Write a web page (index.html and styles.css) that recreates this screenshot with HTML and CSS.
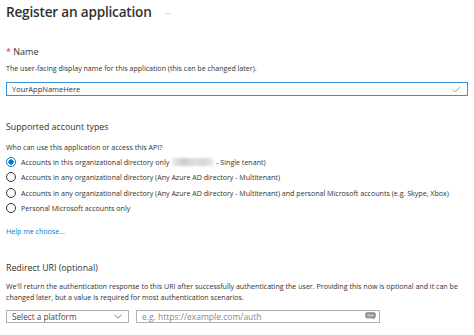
FILE: index.html
```html
<!DOCTYPE html>
<html lang="en">
<head>
    <meta charset="UTF-8">
    <title>Register an application</title>
    <link rel="stylesheet" href="styles.css">
</head>
<body>
<div class="page">
    <div class="title-row">
        <h1>Register an application</h1>
        <span class="more">&middot;&middot;&middot;</span>
    </div>

    <div class="label"><span class="req">*</span> Name</div>
    <p class="hint">The user-facing display name for this application (this can be changed later).</p>
    <div class="input valid">
        <span class="value">YourAppNameHere</span>
        <svg class="check" width="9" height="7" viewBox="0 0 9 7"><path d="M1 3.6 L3.4 6 L8 1" fill="none" stroke="#7fb24a" stroke-width="1"/></svg>
    </div>

    <h2>Supported account types</h2>
    <p class="hint">Who can use this application or access this API?</p>
    <div class="radios">
        <div class="radio checked"><span class="circle"></span>Accounts in this organizational directory only <span class="blur"></span>- Single tenant)</div>
        <div class="radio"><span class="circle"></span>Accounts in any organizational directory (Any Azure AD directory - Multitenant)</div>
        <div class="radio"><span class="circle"></span>Accounts in any organizational directory (Any Azure AD directory - Multitenant) and personal Microsoft accounts (e.g. Skype, Xbox)</div>
        <div class="radio"><span class="circle"></span>Personal Microsoft accounts only</div>
    </div>
    <a class="link" href="#">Help me choose...</a>

    <h2 class="redirect">Redirect URI (optional)</h2>
    <p class="hint two">We'll return the authentication response to this URI after successfully authenticating the user. Providing this now is optional and it can be<br>changed later, but a value is required for most authentication scenarios.</p>
    <div class="uri-row">
        <div class="select">
            <span>Select a platform</span>
            <svg width="8" height="5" viewBox="0 0 8 5"><path d="M0.5 0.8 L4 4.2 L7.5 0.8" fill="none" stroke="#605e5c" stroke-width="0.8"/></svg>
        </div>
        <div class="input uri">
            <span class="placeholder">e.g. https://example.com/auth</span>
            <svg width="11" height="8" viewBox="0 0 11 8"><rect x="0.8" y="0.8" width="9.4" height="5" rx="1" fill="#a19f9d" stroke="#797775" stroke-width="0.9"/><path d="M2.5 3.3 H8.5" stroke="#e1dfdd" stroke-width="0.8"/><path d="M7 5.8 L8.6 7.4 L8.6 5.8" fill="#797775"/></svg>
        </div>
    </div>
</div>
</body>
</html>
```

FILE: styles.css
```css
body,html{
    margin: 0;
    padding: 0;
    background: #fff;
}
.page{
    padding: 0 6px;
    font-family: "Open Sans", "Noto Sans", sans-serif;
    color: #323130;
}
.title-row{
    display: flex;
    align-items: center;
    height: 24px;
}
h1{
    margin: 0;
    font-size: 13.6px;
    font-weight: 600;
    letter-spacing: -0.2px;
    line-height: 24px;
}
.more{
    margin-left: 13px;
    font-size: 8px;
    color: #8a8886;
}
.label{
    margin-top: 21px;
    font-size: 9px;
    line-height: 14px;
}
.req{
    color: #d13438;
}
.hint{
    margin: 4px 0 0;
    font-size: 7.1px;
    line-height: 10px;
}
.input{
    box-sizing: border-box;
    display: flex;
    align-items: center;
    justify-content: space-between;
    height: 14px;
    padding: 0 6px 0 5px;
    border: 1px solid #b3b0ad;
    font-size: 7.5px;
}
.input.valid{
    margin-top: 9px;
    border-color: #3a8fd9;
}
h2{
    margin: 24px 0 0;
    font-size: 8.8px;
    font-weight: 400;
    line-height: 14px;
}
h2 + .hint{
    margin-top: 8px;
}
.radios{
    margin-top: 2px;
}
.radio{
    display: flex;
    align-items: center;
    height: 15.5px;
    font-size: 7.1px;
}
.circle{
    box-sizing: border-box;
    width: 10px;
    height: 10px;
    margin-right: 5px;
    border: 1px solid #323130;
    border-radius: 50%;
    flex-shrink: 0;
}
.radio.checked .circle{
    border-color: #0078d4;
    background: radial-gradient(circle, #0078d4 0 2.4px, #fff 2.9px);
}
.blur{
    display: inline-block;
    width: 42px;
    height: 8px;
    margin: 0 2px 0 3px;
    background: linear-gradient(90deg, #eceaea, #cfcdcc 30%, #e0dfde 55%, #d6d5d4 75%, #efeeee);
    filter: blur(1px);
}
.link{
    display: block;
    margin-top: 10px;
    font-size: 7.1px;
    line-height: 10px;
    color: #0078d4;
    text-decoration: none;
}
h2.redirect{
    margin-top: 25px;
}
.hint.two{
    margin-top: 5.5px;
    line-height: 11px;
}
.uri-row{
    display: flex;
    gap: 7px;
    margin-top: 7px;
}
.select{
    box-sizing: border-box;
    display: flex;
    align-items: center;
    justify-content: space-between;
    width: 123px;
    height: 13px;
    padding: 0 6px 0 5px;
    border: 1px solid #b3b0ad;
    font-size: 8.2px;
    color: #484644;
}
.input.uri{
    width: 244px;
    height: 13px;
    padding-right: 3px;
    font-size: 8.5px;
}
.placeholder{
    color: #8a8886;
}
```
